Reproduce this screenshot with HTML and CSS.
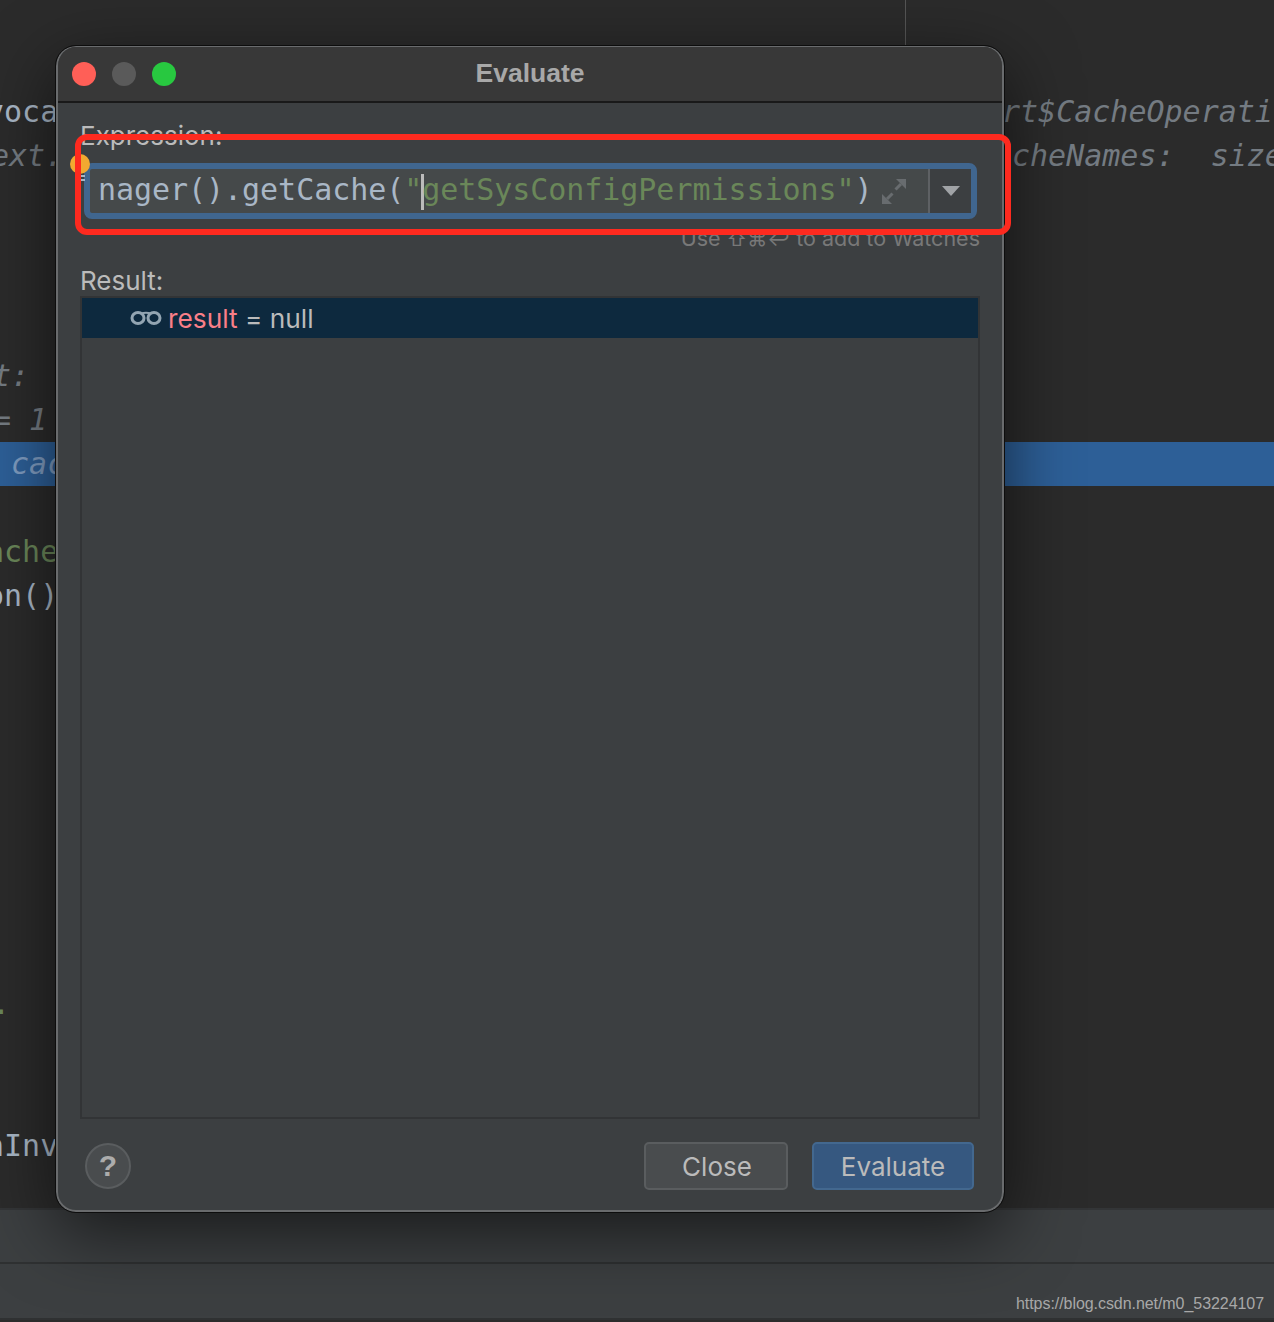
FILE: index.html
```html
<!DOCTYPE html>
<html lang="en">
<head>
<meta charset="utf-8">
<title>Evaluate</title>
<link rel="stylesheet" href="styles.css">
</head>
<body>
<div class="page">
  <div class="editor">
    <div class="margin-line"></div>
    <div class="row"><span class="left code">voca</span><span class="right ital">rt$CacheOperation</span></div>
    <div class="row"><span class="left ital ext">ext.</span><span class="right ital indent">cheNames:  size</span></div>
    <div class="gap-4"></div>
    <div class="row"><span class="left ital">t:</span></div>
    <div class="row"><span class="left ital">= 1</span></div>
    <div class="row row-active"><span class="left ital active-text"> cac</span></div>
    <div class="gap-1"></div>
    <div class="row"><span class="left str">ache</span></div>
    <div class="row"><span class="left code">on()</span></div>
    <div class="gap-dot"></div>
    <div class="row"><span class="left str dot">.</span></div>
    <div class="gap-inv"></div>
    <div class="row"><span class="left code">nInv</span></div>
  </div>
  <div class="toolbar"></div>
  <div class="statusbar"><span class="watermark">https://blog.csdn.net/m0_53224107</span></div>

  <section class="dialog">
    <header class="titlebar">
      <span class="light light-red"></span>
      <span class="light light-grey"></span>
      <span class="light light-green"></span>
      <h1 class="title">Evaluate</h1>
    </header>
    <div class="body">
      <label class="label label-expr">Expression:</label>
      <div class="combo">
        <div class="combo-text"><span class="code-in">nager().getCache(</span><span class="str-in">"</span><span class="caret"></span><span class="str-in">getSysConfigPermissions"</span><span class="code-in">)</span></div>
        <svg class="expand" width="26" height="27" viewBox="0 0 26 27" aria-hidden="true">
          <path d="M25 1H15L25 11Z" fill="#686c6f"/>
          <path d="M1 26H11L1 16Z" fill="#686c6f"/>
          <path d="M20 6L14.5 11.5M6 21L11.5 15.5" fill="none" stroke="#686c6f" stroke-width="3"/>
        </svg>
        <div class="combo-arrow"><span class="tri"></span></div>
      </div>
      <div class="hint">Use <span class="keys">⇧⌘↩</span> to add to Watches</div>
      <label class="label label-result">Result:</label>
      <div class="tree">
        <div class="tree-row">
          <svg class="glasses" width="32" height="16" viewBox="0 0 32 16" aria-hidden="true">
            <ellipse cx="8" cy="8" rx="6" ry="5.5" fill="none" stroke="#93a5b2" stroke-width="3"/>
            <ellipse cx="24" cy="8" rx="6" ry="5.5" fill="none" stroke="#93a5b2" stroke-width="3"/>
            <path d="M11 3.5Q16 1.8 21 3.5" fill="none" stroke="#93a5b2" stroke-width="2"/>
          </svg>
          <span class="var">result</span><span class="val"> = null</span>
        </div>
      </div>
      <div class="actions">
        <button class="help" type="button">?</button>
        <div class="buttons">
          <button class="btn" type="button">Close</button>
          <button class="btn btn-primary" type="button">Evaluate</button>
        </div>
      </div>
    </div>
  </section>

  <div class="bulb"><span class="bulb-base"></span></div>
  <div class="annotation"></div>
</div>
</body>
</html>
```

FILE: styles.css
```css
* { box-sizing: border-box; }
html, body { margin: 0; padding: 0; }
body { background: #2b2b2b; font-family: "Inter", "Liberation Sans", sans-serif; }
.page { position: relative; width: 1274px; height: 1322px; overflow: hidden; background: #2b2b2b; }

/* Editor behind the dialog */
.editor { position: relative; height: 1208px; padding-top: 90px; background: #2b2b2b; font-family: "DejaVu Sans Mono", monospace; font-size: 30px; }
.margin-line { position: absolute; left: 905px; top: 0; width: 1px; height: 90px; background: #555; }
.row { display: flex; height: 44px; line-height: 44px; white-space: pre; }
.left { display: block; flex: none; width: 56px; overflow: hidden; text-indent: -14px; }
.right { display: block; margin-left: 946px; width: 272px; overflow: hidden; }
.indent { padding-left: 10px; }
.code { color: #a9b7c6; }
.str { color: #6a8759; }
.ital { color: #747b82; font-style: italic; }
.left.ital { text-indent: -7px; }
.left.ext { text-indent: -9px; }
.left.dot { text-indent: -8px; }
.active-text { color: #7f9cc0; }
.row-active { background: #2d5f97; }
.gap-1 { height: 44px; }
.gap-4 { height: 176px; }
.gap-dot { height: 364px; }
.gap-inv { height: 98px; }

/* IDE bars */
.toolbar { height: 56px; background: #3c3f41; border-bottom: 2px solid #2f3132; border-top: 2px solid #333537; }
.statusbar { height: 56px; padding-right: 10px; background: #3c3f41; border-bottom: 2px solid #2f3132; display: flex; justify-content: flex-end; align-items: center; }
.watermark { font-family: "Liberation Sans", Arial, sans-serif; font-size: 16px; letter-spacing: -.06px; color: #a8a8a8; padding-top: 26px; }

/* Dialog window */
.dialog { position: absolute; left: 56px; top: 46px; width: 948px; height: 1166px; display: flex; flex-direction: column; background: #3c3f41; border-radius: 20px; border: 2px solid #696b6d; border-top-width: 1px; outline: 1px solid #0d0d0d; box-shadow: 0 20px 70px rgba(0, 0, 0, .6); overflow: hidden; }
.titlebar { position: relative; display: flex; align-items: center; flex: none; height: 56px; padding-left: 14px; gap: 16px; background: #383838; border-bottom: 2px solid #191919; }
.light { width: 24px; height: 24px; border-radius: 50%; flex: none; }
.light-red { background: #ff5f57; }
.light-grey { background: #5a5a5a; }
.light-green { background: #28c840; }
.title { position: absolute; left: 0; right: 0; top: 10px; margin: 0; text-align: center; font-size: 26.5px; line-height: 32px; font-weight: 700; color: #a8a8a8; font-family: "Liberation Sans", sans-serif; }
.body { flex: 1; display: flex; flex-direction: column; min-height: 0; padding: 0 22px; }
.label { display: block; font-size: 26px; line-height: 30px; color: #bbbbbb; }
.label-expr { margin-top: 18px; }
.label-result { margin-top: 14px; }

.combo { display: flex; align-items: center; height: 56px; margin: 12px 3px 0 4px; background: #45494a; border: 6px solid #40668f; border-radius: 8px; }
.combo-text { flex: 1; padding: 0 0 2px 8px; font-family: "DejaVu Sans Mono", monospace; font-size: 30px; letter-spacing: -.05px; line-height: 42px; white-space: pre; }
.code-in { color: #a9b7c6; }
.str-in { color: #6a8759; }
.caret { display: inline-block; width: 3px; height: 36px; margin: 0 -2px 0 -1px; background: #bbbbbb; vertical-align: middle; }
.expand { flex: none; margin-right: 21px; }
.combo-arrow { flex: none; display: flex; align-items: center; justify-content: center; width: 43px; height: 100%; border-left: 2px solid #5e6164; background: #3c3f41; }
.tri { width: 0; height: 0; border-left: 9px solid transparent; border-right: 9px solid transparent; border-top: 10px solid #a0a3a6; }

.hint { margin-top: 6px; text-align: right; font-size: 21.5px; line-height: 26px; color: #787878; }
.keys { font-size: 20px; }

.tree { flex: 1; min-height: 0; margin-top: 0; border: 2px solid #323436; }
.tree-row { display: flex; align-items: center; height: 40px; padding-left: 48px; background: #0d293e; font-size: 26.3px; white-space: pre; }
.glasses { flex: none; margin-right: 6px; }
.var { color: #fa7f88; }
.val { color: #bbbbbb; }

.actions { flex: none; display: flex; align-items: center; justify-content: space-between; height: 91px; padding: 3px 6px 0 5px; }
.help { width: 46px; height: 46px; padding: 0; border-radius: 50%; background: #494c4e; border: 2px solid #5a5d5f; color: #acacac; font-family: "Liberation Sans", sans-serif; font-weight: 700; font-size: 30px; }
.buttons { display: flex; gap: 24px; }
.btn { height: 48px; width: 144px; padding: 0 0 0 2px; border-radius: 5px; background: #494c4e; border: 2px solid #5a5d5f; color: #bbbbbb; font-family: "Inter", sans-serif; font-size: 26px; }
.btn-primary { width: 162px; padding: 0; background: #365880; border-color: #43688f; }

/* Overlays */
.bulb { position: absolute; left: 70px; top: 154px; width: 20px; height: 20px; border-radius: 50%; background: #f2a930; }
.bulb-base { position: absolute; left: 7px; top: 21px; width: 8px; height: 6px; border-top: 2px solid #a9b7c6; border-bottom: 2px solid #a9b7c6; }
.annotation { position: absolute; left: 75px; top: 134px; width: 936px; height: 101px; border: 6px solid #fe2a1f; border-radius: 12px; }
```
